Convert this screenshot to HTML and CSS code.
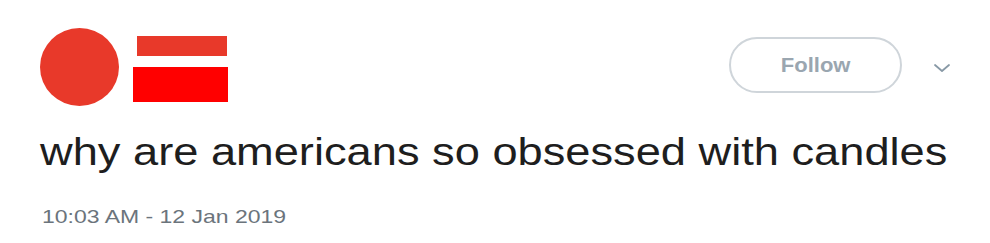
FILE: index.html
```html
<!DOCTYPE html>
<html>
<head>
<meta charset="utf-8">
<link rel="stylesheet" href="styles.css">
</head>
<body>
<div class="tweet">
  <div class="header">
    <div class="avatar"></div>
    <div class="names">
      <div class="bar bar-top"></div>
      <div class="bar bar-bottom"></div>
    </div>
    <div class="spacer"></div>
    <button class="follow"><span class="follow-label">Follow</span></button>
    <svg class="chevron" width="20" height="12" viewBox="0 0 20 12"><path d="M3 3 L10 9 L17 3" fill="none" stroke="#8899a6" stroke-width="1.8" stroke-linecap="round" stroke-linejoin="round"/></svg>
  </div>
  <div class="text-row"><span class="text">why are americans so obsessed with candles</span></div>
  <div class="time-row"><span class="time">10:03 AM - 12 Jan 2019</span></div>
</div>
</body>
</html>
```
FILE: styles.css
```css
* { box-sizing: border-box; }
html, body { margin: 0; padding: 0; background: #fff; }
body { width: 990px; height: 243px; overflow: hidden; font-family: "Liberation Sans", Arial, sans-serif; }
.tweet { padding: 28px 38px 0 40px; }
.header { display: flex; align-items: flex-start; height: 80px; }
.avatar { width: 79px; height: 78px; border-radius: 50%; background: #e8392a; flex: none; }
.names { margin-left: 14px; padding-top: 8px; display: flex; flex-direction: column; }
.bar-top { width: 90px; height: 20px; background: #e8392a; margin-left: 4px; }
.bar-bottom { width: 95px; height: 35px; background: #ff0000; margin-top: 11px; }
.spacer { flex: 1; }
.follow { margin-top: 9px; width: 173px; height: 56px; border: 2px solid #cfd5da; border-radius: 28px; background: #fff; color: #9aa6b0; font-family: "Liberation Sans", Arial, sans-serif; font-weight: bold; font-size: 20px; padding: 0; }
.follow-label { display: inline-block; transform: scaleX(1.1); }
.chevron { margin-left: 30px; margin-top: 34px; }
.text-row { margin-top: 22px; height: 44px; line-height: 44px; white-space: nowrap; }
.text { display: inline-block; font-size: 38px; color: #1e1e1e; transform: scaleX(1.19); transform-origin: left center; }
.time-row { margin-top: 32px; line-height: 22px; margin-left: 2px; white-space: nowrap; }
.time { display: inline-block; font-size: 19px; color: #6b747c; transform: scaleX(1.21); transform-origin: left center; }
```
